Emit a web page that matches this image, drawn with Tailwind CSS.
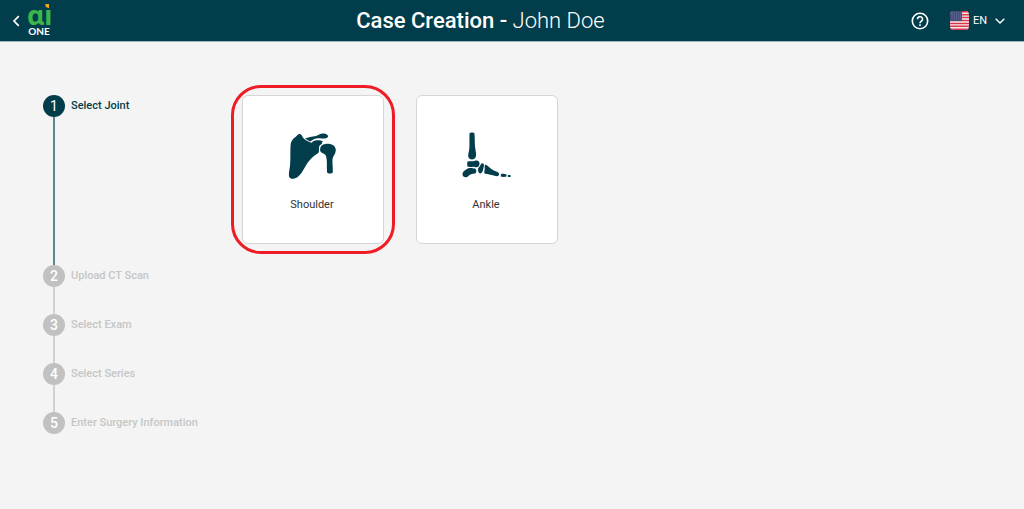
<!DOCTYPE html>
<html lang="en">
<head>
  <meta charset="UTF-8" />
  <meta name="viewport" content="width=device-width, initial-scale=1.0" />
  <title>Case Creation</title>
  <script src="https://cdn.jsdelivr.net/npm/@tailwindcss/browser@4"></script>
</head>
<body class="bg-[#f4f4f4] min-h-screen font-['Roboto',sans-serif] text-[#023d4b]">

  <!-- Header -->
  <header class="bg-[#023d4b] text-white h-[42px] border-b border-[#9fb4ba] pl-3 pr-[19px] flex justify-between items-center">
    <div class="flex items-center gap-2">
      <a href="#" aria-label="Back">
        <svg class="w-2 h-3" viewBox="0 0 8 12" fill="none" stroke="currentColor" stroke-width="1.7"><path d="M6.8 1.2 2 6l4.800 4.800" /></svg>
      </a>
      <a href="#" aria-label="ai ONE">
        <svg class="w-[22px] h-[37px] overflow-visible" viewBox="0 0 22 37">
          <text x="-1" y="23" font-family="Noto Sans, DejaVu Sans, sans-serif" font-size="27" font-weight="700" fill="#3cb54a">ɑı</text>
          <path d="M17.500 2h3.500v4.200l-3.500-1.500z" fill="#f6a81c" />
          <text x="11" y="33" text-anchor="middle" font-family="Lato, sans-serif" font-size="10" font-weight="700" fill="#fff">ONE</text>
        </svg>
      </a>
    </div>

    <h1 class="text-[22px] leading-6 font-light"><span class="font-medium">Case Creation -</span> John Doe</h1>

    <div class="flex items-center gap-[21px]">
      <button type="button" aria-label="Help">
        <svg class="w-[18px] h-[18px]" viewBox="0 0 18 18" fill="none" stroke="currentColor" stroke-width="1.600">
          <circle cx="9" cy="9" r="7.700" />
          <path d="M6.500 7.200a2.500 2.500 0 1 1 3.900 2c-.9.600-1.400 1-1.400 2" />
          <path d="M9 12.300v1.700" />
        </svg>
      </button>
      <button type="button" class="flex items-center gap-1 text-[11px] leading-4" aria-label="Language: EN">
        <svg class="w-[19px] h-[19px] rounded" viewBox="0 0 19 19">
          <path d="M0 0h19v19H0z" fill="#f4f0f2" />
          <path d="M0 .8h19M0 3.700h19M0 6.600h19M0 9.500h19M0 12.400h19M0 15.300h19M0 18.200h19" stroke="#d8354a" stroke-width="1.500" />
          <path d="M0 0h12v10H0z" fill="#414a7c" />
          <path d="M1.500 2h10M1.500 4h10M1.500 6h10M1.500 8h10" stroke="#9299b8" stroke-width=".7" stroke-dasharray="1 1.200" />
        </svg>
        <span>EN</span>
        <svg class="w-[10px] h-[6px] ml-1" viewBox="0 0 10 6" fill="none" stroke="currentColor" stroke-width="1.400"><path d="m.7.700 4.300 4.300L9.300.7" /></svg>
      </button>
    </div>
  </header>

  <main class="pl-[43px] pr-6 pt-[53px] flex">

    <!-- Steps -->
    <ol class="w-[199px] shrink-0 text-[11px] leading-[22px] font-medium text-[#c6c6c6]">
      <li class="flex gap-[6px] min-h-[170px] text-[#023d4b]">
        <div class="flex flex-col items-center">
          <span class="w-[22px] h-[22px] rounded-full bg-[#023d4b] text-white text-sm leading-[22px] font-normal text-center">1</span>
          <span class="w-[2px] grow bg-[#5c8791]"></span>
        </div>
        <span>Select Joint</span>
      </li>
      <li class="flex gap-[6px] min-h-[49px]">
        <div class="flex flex-col items-center">
          <span class="w-[22px] h-[22px] rounded-full bg-[#c1c1c1] text-white text-sm leading-[22px] text-center">2</span>
          <span class="w-[2px] grow bg-[#d2d2d2]"></span>
        </div>
        <span>Upload CT Scan</span>
      </li>
      <li class="flex gap-[6px] min-h-[49px]">
        <div class="flex flex-col items-center">
          <span class="w-[22px] h-[22px] rounded-full bg-[#c1c1c1] text-white text-sm leading-[22px] text-center">3</span>
          <span class="w-[2px] grow bg-[#d2d2d2]"></span>
        </div>
        <span>Select Exam</span>
      </li>
      <li class="flex gap-[6px] min-h-[49px]">
        <div class="flex flex-col items-center">
          <span class="w-[22px] h-[22px] rounded-full bg-[#c1c1c1] text-white text-sm leading-[22px] text-center">4</span>
          <span class="w-[2px] grow bg-[#d2d2d2]"></span>
        </div>
        <span>Select Series</span>
      </li>
      <li class="flex gap-[6px]">
        <span class="w-[22px] h-[22px] rounded-full bg-[#c1c1c1] text-white text-sm leading-[22px] text-center">5</span>
        <span>Enter Surgery Information</span>
      </li>
    </ol>

    <!-- Joint cards -->
    <div class="flex flex-wrap items-start gap-8 text-[11px] leading-4 text-[#333]">
      <div class="relative">
        <button type="button" class="w-[142px] pt-[36px] pb-[30px] pr-[2px] flex flex-col items-center gap-[15px] bg-white border border-[#d6d6d6] rounded-md">
          <svg class="w-[50px] h-[50px]" viewBox="0 0 50 50" fill="#023d4b">
            <path d="M10.500 3C11.500 1.500 13.500 1.700 14.500 3C15.500 5 16.500 7 19.500 8.500L23.500 10.500C25 11 25.500 10 26.500 9C29 7.700 34 8 36 9.300C35 10.200 34.500 11 35 12C32.500 13 31.700 14.500 32 17C31.800 19 32.500 20.500 30.500 21.500C25 25 21 29.500 18 35C15.500 39.500 13 44 9 46C7 47 3 47.500 2 44.500C1.500 41 2.500 38 3 34C3.800 26 3 18 3.700 12C4.500 7 8 6 10.500 3Z" />
            <path d="M18 6.500C21 5.300 25 4.800 29 4C31.500 3.200 33 1.500 36 1.500C39 1.500 41.500 3 41 4.700C40.500 6.500 36 7 33 6.300C29 5.800 26.500 7 24 9L23 9.500Z" />
            <path d="M33.500 15C35 12.500 38 11.500 41.500 11.800C46 12 49 15 48.800 18.500C48.500 22 46 24 45.500 27C45.200 31 46 36 45.800 40C45.500 42 40.500 42 40 40C39.500 34 40.500 29 39 24C38 21 33.500 21.500 33 18Z" />
          </svg>
          <span>Shoulder</span>
        </button>
        <div class="absolute -inset-x-[11px] -inset-y-[10px] border-3 border-[#ee1c25] rounded-[30px] pointer-events-none"></div>
      </div>
      <button type="button" class="w-[142px] pt-[36px] pb-[30px] pr-[2px] flex flex-col items-center gap-[15px] bg-white border border-[#d6d6d6] rounded-md">
        <svg class="w-[50px] h-[50px]" viewBox="0 0 50 50" fill="#023d4b">
          <path d="M8.500 1.500C9 0 13 0 13.500 1.500C14 8 13.500 13 14.500 18C15 21 15.500 23 14.500 25.500C13 28 9 28 7.500 25.500C6.500 23 8 20 8.300 17C8.700 12 8.300 7 8.500 1.500Z" />
          <path d="M6.500 29.500C10 28.500 12.500 30 14.500 28.500C17 28 19 30 18.500 32C18 35 16 36 13.500 34.700C11 34.500 8.500 35.500 6.500 34.500C6 33 6.200 31 6.500 29.500Z" />
          <path d="M6 37C8 35 12 36.500 14 36.500C16 37.500 15.500 41 14 41.500C11 42 9 42 7.500 44C5 46.500 1.500 45 1.500 42.500C1.500 39.500 4 38.500 6 37Z" />
          <path d="M20.500 31.500C22.500 30.500 23.500 33 22.700 35C22 37.500 22 40.500 19.500 41.500C17 41 16.800 38 17.300 36C19 35 19 33 20.500 31.500Z" />
          <path d="M24.500 32.500C27.500 33.500 29 37 32 38C34.500 39.500 37.500 39.700 38 41.500C38.500 43.500 37 44.500 34.500 44C31 43 27.500 42 24 41.700C22.500 41 24 38 23.700 36C23.700 34.500 23.500 33 24.500 32.500Z" />
          <path d="M40 42C41.500 41.500 44 42 45.500 42.500V44.500C44 45 41 45 39.800 44.500Z" />
          <path d="M46.800 43.200C48 42.600 50 43 50 44C49.800 45 48 45.300 46.800 44.800Z" />
        </svg>
        <span>Ankle</span>
      </button>
    </div>
  </main>

</body>
</html>
